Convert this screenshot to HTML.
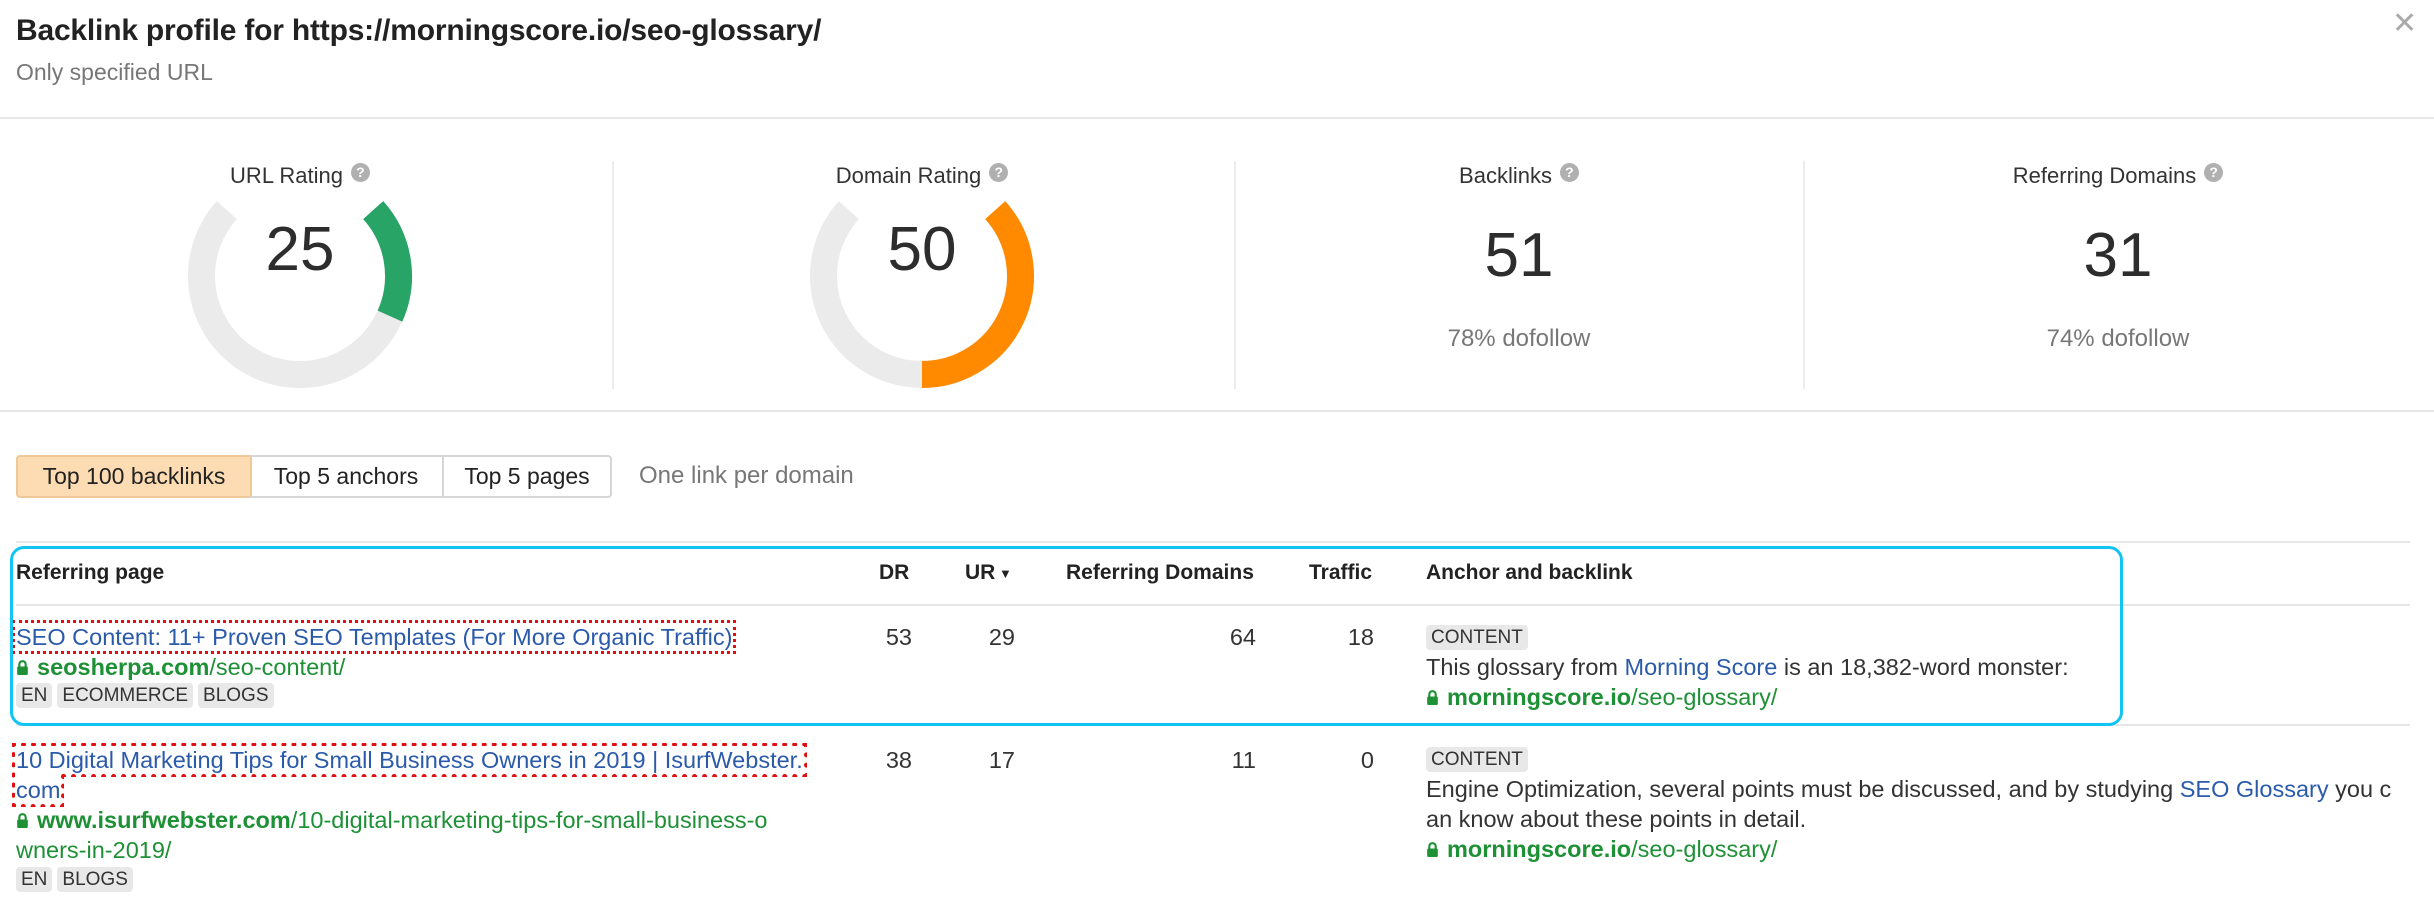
<!DOCTYPE html>
<html><head><meta charset="utf-8"><style>
*{margin:0;padding:0;box-sizing:border-box}
body{width:2434px;height:898px;background:#fff;font-family:"Liberation Sans",sans-serif;color:#333;position:relative;overflow:hidden}
.a{position:absolute;white-space:nowrap}
.hl{position:absolute;height:2px;background:#e6e6e6}
.vl{position:absolute;width:2px;background:#ececec;top:161px;height:228px}
.lab{position:absolute;font-size:22px;color:#333;text-align:center;width:500px;top:163px}
.q{display:inline-block;width:19px;height:19px;border-radius:50%;background:#b0b0b0;color:#fff;font-size:14px;font-weight:bold;line-height:19px;text-align:center;vertical-align:6px;margin-left:8px}
.big{position:absolute;font-size:62px;text-align:center;width:300px;color:#2d2d2d}
.sub{position:absolute;font-size:24px;color:#777;text-align:center;width:400px;top:323px}
.tab{position:absolute;top:455px;height:43px;border:2px solid #d6d6d6;font-size:23px;line-height:39px;text-align:center;color:#222}
.th{position:absolute;top:561px;font-size:21px;font-weight:bold;color:#222}
.t{font-size:23.5px;line-height:30px}
.lk{color:#2a5aaa}
.gr{color:#1e9035}
.tag{display:inline-block;background:#e8e8e8;border-radius:4px;font-size:19px;padding:0 5px;line-height:25px;color:#333;margin-right:5px}
.num{position:absolute;font-size:23.5px;text-align:right;width:80px}
.ol{outline:3px dotted #e01010;outline-offset:1px}
</style></head><body>
<div class="a" style="left:16px;top:14px;font-size:30px;font-weight:bold;color:#222;letter-spacing:-0.2px">Backlink profile for https://morningscore.io/seo-glossary/</div>
<div class="a" style="left:16px;top:59px;font-size:23px;color:#777">Only specified URL</div>
<div class="a" style="left:2392px;top:6px;font-size:30px;color:#aaa">✕</div>
<div class="hl" style="left:0;width:2434px;top:117px"></div>

<div class="lab" style="left:50px">URL Rating<span class="q">?</span></div>
<svg class="a" style="left:180px;top:156px" width="240" height="240" viewBox="-120 -120 240 240">
<path d="M73.2 -65.9 A98.5 98.5 0 1 1 -73.2 -65.9" fill="none" stroke="#ebebeb" stroke-width="27"/>
<path d="M73.2 -65.9 A98.5 98.5 0 0 1 90 40.1" fill="none" stroke="#28a466" stroke-width="27"/>
</svg>
<div class="big" style="left:150px;top:214px">25</div>

<div class="vl" style="left:612px"></div>
<div class="lab" style="left:672px">Domain Rating<span class="q">?</span></div>
<svg class="a" style="left:802px;top:156px" width="240" height="240" viewBox="-120 -120 240 240">
<path d="M73.2 -65.9 A98.5 98.5 0 1 1 -73.2 -65.9" fill="none" stroke="#ebebeb" stroke-width="27"/>
<path d="M73.2 -65.9 A98.5 98.5 0 0 1 0 98.5" fill="none" stroke="#ff8a00" stroke-width="27"/>
</svg>
<div class="big" style="left:772px;top:214px">50</div>

<div class="vl" style="left:1234px"></div>
<div class="lab" style="left:1269px">Backlinks<span class="q">?</span></div>
<div class="big" style="left:1369px;top:220px">51</div>
<div class="sub" style="left:1319px;top:325px">78% dofollow</div>

<div class="vl" style="left:1803px"></div>
<div class="lab" style="left:1868px">Referring Domains<span class="q">?</span></div>
<div class="big" style="left:1968px;top:220px">31</div>
<div class="sub" style="left:1918px;top:325px">74% dofollow</div>

<div class="hl" style="left:0;width:2434px;top:410px"></div>

<div class="tab" style="left:16px;width:236px;background:#fddcb3;border-color:#f0c898;border-radius:4px 0 0 4px">Top 100 backlinks</div>
<div class="tab" style="left:250px;width:194px;border-left:none">Top 5 anchors</div>
<div class="tab" style="left:442px;width:170px;border-radius:0 4px 4px 0">Top 5 pages</div>
<div class="a" style="left:639px;top:462px;font-size:24px;color:#777">One link per domain</div>

<div class="hl" style="left:16px;width:2394px;top:541px"></div>
<div class="th" style="left:16px">Referring page</div>
<div class="th" style="left:879px">DR</div>
<div class="th" style="left:965px">UR<span style="font-size:13px;vertical-align:1px"> ▼</span></div>
<div class="th" style="left:1066px">Referring Domains</div>
<div class="th" style="left:1309px">Traffic</div>
<div class="th" style="left:1426px">Anchor and backlink</div>
<div class="hl" style="left:16px;width:2394px;top:604px"></div>
<div class="hl" style="left:16px;width:2394px;top:724px"></div>

<svg width="0" height="0" style="position:absolute"><defs><symbol id="lk" viewBox="0 0 12 16"><path d="M3 7V5a3 3 0 0 1 6 0v2" fill="none" stroke="#1e9035" stroke-width="2"/><rect x="1" y="7" width="10" height="8" rx="1" fill="#1e9035"/></symbol></defs></svg>

<div class="a t" style="left:16px;top:622px"><span class="lk ol">SEO Content: 11+ Proven SEO Templates (For More Organic Traffic)</span><br><svg width="13" height="17" style="vertical-align:-1px;margin-right:8px"><use href="#lk"/></svg><span class="gr"><b>seosherpa.com</b>/seo-content/</span></div>
<div class="a" style="left:16px;top:683px"><span class="tag">EN</span><span class="tag">ECOMMERCE</span><span class="tag">BLOGS</span></div>
<div class="num t" style="left:832px;top:622px">53</div>
<div class="num t" style="left:935px;top:622px">29</div>
<div class="num t" style="left:1176px;top:622px">64</div>
<div class="num t" style="left:1294px;top:622px">18</div>
<div class="a" style="left:1426px;top:625px"><span class="tag">CONTENT</span></div>
<div class="a t" style="left:1426px;top:652px">This glossary from <span class="lk">Morning Score</span> is an 18,382-word monster:<br><svg width="13" height="17" style="vertical-align:-1px;margin-right:8px"><use href="#lk"/></svg><span class="gr"><b>morningscore.io</b>/seo-glossary/</span></div>

<div class="a t" style="left:16px;top:745px"><span class="lk ol">10 Digital Marketing Tips for Small Business Owners in 2019 | IsurfWebster.<br>com</span><br><svg width="13" height="17" style="vertical-align:-1px;margin-right:8px"><use href="#lk"/></svg><span class="gr"><b>www.isurfwebster.com</b>/10-digital-marketing-tips-for-small-business-o<br>wners-in-2019/</span></div>
<div class="a" style="left:16px;top:867px"><span class="tag">EN</span><span class="tag">BLOGS</span></div>
<div class="num t" style="left:832px;top:745px">38</div>
<div class="num t" style="left:935px;top:745px">17</div>
<div class="num t" style="left:1176px;top:745px">11</div>
<div class="num t" style="left:1294px;top:745px">0</div>
<div class="a" style="left:1426px;top:747px"><span class="tag">CONTENT</span></div>
<div class="a t" style="left:1426px;top:774px">Engine Optimization, several points must be discussed, and by studying <span class="lk">SEO Glossary</span> you c<br>an know about these points in detail.<br><svg width="13" height="17" style="vertical-align:-1px;margin-right:8px"><use href="#lk"/></svg><span class="gr"><b>morningscore.io</b>/seo-glossary/</span></div>

<div class="a" style="left:10px;top:546px;width:2113px;height:180px;border:3px solid #12c4f2;border-radius:14px"></div>
</body></html>
